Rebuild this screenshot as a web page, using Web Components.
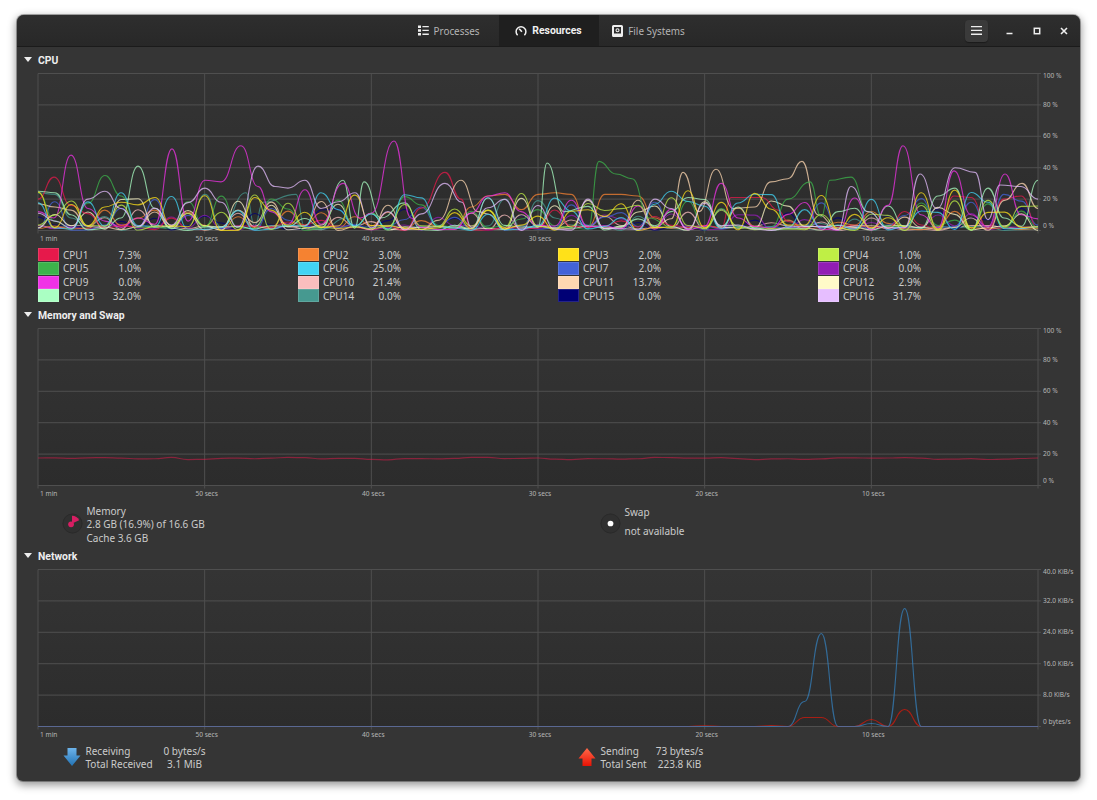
<!DOCTYPE html>
<html>
<head>
<meta charset="utf-8">
<title>System Monitor</title>
<style>
html, body { margin: 0; background: #fff; }
body { padding: 15px 17px 19px; font-family: "Noto Sans", "Open Sans", sans-serif; }
</style>
</head>
<body>
<gsm-window>
  <gsm-header slot="header">
    <gsm-tab>
      <svg slot="icon" width="11" height="11" viewBox="0 0 11 11" fill="#eee"><path d="M0 .5h3v2.6H0zM0 4.2h3v2.6H0zM0 7.9h3v2.6H0zM4.4 1h6.4v1.3H4.4zM4.4 4.8h6.4v1.3H4.4zM4.4 8.6h6.4v1.3H4.4z"/></svg>
      Processes
    </gsm-tab>
    <gsm-tab active>
      <svg slot="icon" width="12" height="12" viewBox="0 0 12 12" fill="none" stroke="#f2f2f2"><path d="M2.6 10.2A4.9 4.9 0 1 1 9.4 10.2" stroke-width="1.5"/><path d="M4.2 3.8 6.9 6.8" stroke-width="1.6"/></svg>
      Resources
    </gsm-tab>
    <gsm-tab>
      <svg slot="icon" width="11" height="12" viewBox="0 0 11 12"><path fill-rule="evenodd" fill="#eee" d="M1.5 0h8A1.5 1.5 0 0 1 11 1.5v9A1.5 1.5 0 0 1 9.500 12h-8A1.500 1.500 0 0 1 0 10.500v-9A1.500 1.500 0 0 1 1.500 0zM2 2v6.600h7V2z"/><circle cx="5.500" cy="5.200" r="1.500" fill="none" stroke="#eee" stroke-width="1.100"/></svg>
      File Systems
    </gsm-tab>
  </gsm-header>

  <gsm-section title="CPU">
    <gsm-graph id="cpu" ylabels="100 %,80 %,60 %,40 %,20 %,0 %"></gsm-graph>
    <gsm-cpu-legend id="cpulegend"></gsm-cpu-legend>
  </gsm-section>

  <gsm-section title="Memory and Swap">
    <gsm-graph id="mem" ylabels="100 %,80 %,60 %,40 %,20 %,0 %"></gsm-graph>
    <gsm-stats height="41" offset="45" second="538">
      <gsm-stat style="--t:3px">
        <svg slot="icon" width="21" height="21" viewBox="0 0 22 22"><circle cx="11" cy="11" r="10" fill="#303030" stroke="#2a2a2a"/><path d="M10.500 11V2.800A8.500 8.500 0 0 1 18 7.600z" fill="#d81e63"/><circle cx="9.500" cy="11.800" r="3" fill="#d81e63"/></svg>
        <div>Memory</div>
        <div>2.8 GB (16.9%) of 16.6 GB</div>
        <div>Cache 3.6 GB</div>
      </gsm-stat>
      <gsm-stat style="--t:5px">
        <svg slot="icon" width="21" height="21" viewBox="0 0 22 22"><circle cx="11" cy="11" r="10" fill="#303030" stroke="#2a2a2a"/><circle cx="11" cy="11" r="3" fill="#fff"/></svg>
        <div style="margin-top:-8px">Swap</div>
        <div style="margin-top:6px">not available</div>
      </gsm-stat>
    </gsm-stats>
  </gsm-section>

  <gsm-section title="Network">
    <gsm-graph id="net" ylabels="40.0 KiB/s,32.0 KiB/s,24.0 KiB/s,16.0 KiB/s,8.0 KiB/s,0 bytes/s"></gsm-graph>
    <gsm-stats height="26" offset="45" second="515">
      <gsm-stat style="--t:2px">
        <svg slot="icon" width="20" height="20" viewBox="0 0 20 20"><defs><linearGradient id="dn" x1="0" y1="0" x2="0" y2="1"><stop offset="0" stop-color="#6db3ea"/><stop offset="1" stop-color="#2273b4"/></linearGradient></defs><path d="M5.500 1h9v7.500h4L10 19 1.500 8.500h4z" fill="url(#dn)"/></svg>
        <gsm-net-row label="Receiving" value="0 bytes/s" w="75"></gsm-net-row>
        <gsm-net-row label="Total Received" value="3.1 MiB" w="75"></gsm-net-row>
      </gsm-stat>
      <gsm-stat style="--t:2px">
        <svg slot="icon" width="20" height="20" viewBox="0 0 20 20"><defs><linearGradient id="up" x1="0" y1="0" x2="0" y2="1"><stop offset="0" stop-color="#ff6a4a"/><stop offset="1" stop-color="#e81204"/></linearGradient></defs><path d="M10 1l8.500 10.500h-4V19h-9v-7.500h-4z" fill="url(#up)"/></svg>
        <gsm-net-row label="Sending" value="73 bytes/s" w="55"></gsm-net-row>
        <gsm-net-row label="Total Sent" value="223.8 KiB" w="55"></gsm-net-row>
      </gsm-stat>
    </gsm-stats>
  </gsm-section>
</gsm-window>

<script>
class GsmWindow extends HTMLElement {
  constructor() {
    super();
    this.attachShadow({ mode: 'open' });
    this.shadowRoot.innerHTML = `
<style>
:host {
  display: block;
  width: 1063px;
  height: 766px;
  background: #353535;
  color: #d6d6d6;
  border-radius: 7px 7px 6px 6px;
  box-shadow: 0 3px 9px 1px rgba(0,0,0,.42), 0 0 0 1px rgba(0,0,0,.3);
  overflow: hidden;
  font-family: "Noto Sans", "Open Sans", sans-serif;
  font-size: 10px;
}
</style>
<slot name="header"></slot>
<slot></slot>`;
  }
}

class GsmHeader extends HTMLElement {
  constructor() {
    super();
    this.attachShadow({ mode: 'open' });
    this.shadowRoot.innerHTML = `
<style>
:host {
  display: grid;
  grid-template-columns: 1fr auto 1fr;
  height: 32px;
  box-sizing: border-box;
  background: linear-gradient(#2e2e2e, #282828);
  border-bottom: 1px solid #1b1b1b;
}
.tabs { display: flex; grid-column: 2; }
.right { display: flex; grid-column: 3; justify-content: flex-end; align-items: center; padding-right: 3px; }
.menu {
  width: 23px; height: 22px; margin-right: 8px; border-radius: 4px;
  background: #3a3a3a; box-shadow: 0 1px 1px rgba(0,0,0,.35);
  display: flex; align-items: center; justify-content: center;
}
.btn { width: 27px; height: 22px; display: flex; align-items: center; justify-content: center; }
</style>
<div class="tabs"><slot></slot></div>
<div class="right">
  <div class="menu"><svg width="11" height="9" viewBox="0 0 11 9" fill="#eee"><path d="M0 0h11v1.300H0zM0 3.800h11v1.300H0zM0 7.600h11v1.300H0z"/></svg></div>
  <div class="btn"><svg width="7" height="8" viewBox="0 0 7 8" fill="#eee"><path d="M.5 5.800h6v1.500h-6z"/></svg></div>
  <div class="btn"><svg width="8" height="8" viewBox="0 0 8 8" fill="none" stroke="#eee" stroke-width="1.500"><rect x="1.300" y="1.300" width="5.400" height="5.400"/></svg></div>
  <div class="btn"><svg width="8" height="8" viewBox="0 0 8 8" fill="none" stroke="#eee" stroke-width="1.600"><path d="M1 1l6 6M7 1l-6 6"/></svg></div>
</div>`;
  }
}

class GsmTab extends HTMLElement {
  constructor() {
    super();
    this.attachShadow({ mode: 'open' });
    this.shadowRoot.innerHTML = `
<style>
:host {
  display: flex;
  width: 100px;
  align-items: center;
  justify-content: center;
  gap: 5px;
  color: #b4b4b4;
  font-size: 9.900px;
}
:host([active]) { background: #1f1f1f; color: #f0f0f0; font-family: Roboto, sans-serif; font-weight: 700; font-size: 10.400px; }
::slotted(svg) { display: block; flex: none; }
</style>
<slot name="icon"></slot><span><slot></slot></span>`;
  }
}

class GsmSection extends HTMLElement {
  constructor() {
    super();
    this.attachShadow({ mode: 'open' });
    this.shadowRoot.innerHTML = `
<style>
:host { display: block; }
.head {
  height: 26px; box-sizing: border-box; display: flex; align-items: center;
  padding: 1px 0 0 7px; gap: 6px;
  color: #eee; font-family: Roboto, sans-serif; font-weight: 700; font-size: 10.400px;
}
.head i {
  width: 0; height: 0; border-left: 4px solid transparent; border-right: 4px solid transparent;
  border-top: 5px solid #eee; margin-top: -2px;
}
</style>
<div class="head"><i></i><span id="t"></span></div>
<slot></slot>`;
    this.shadowRoot.getElementById('t').textContent = this.getAttribute('title');
  }
}

// one plot: same curve drawing as the real graph, horizontal tangents on each sample
class GsmGraph extends HTMLElement {
  constructor() {
    super();
    this.attachShadow({ mode: 'open' });
    this.left = 21;
    this.w = 1000;
    this.h = 157;
  }
  set series(list) {
    const L = this.left, W = this.w, H = this.h, top = 3.5;
    const labels = this.getAttribute('ylabels').split(',');
    const ty = [6, 34.5, 66, 97.500, 128.500, 156];
    const xl = ['1 min', '50 secs', '40 secs', '30 secs', '20 secs', '10 secs'];
    let s = '';
    for (let i = 0; i <= 5; i++) {
      const y = top + H * i / 5;
      const w = (i === 0 || i === 5) ? 1.2 : 1;
      s += `<path d="M${L} ${y}H${L + W + 3}" stroke="#4f4f4f" stroke-width="${w}"/>`;
      s += `<text x="${L + W + 5}" y="${ty[i] + 2.300}" class="t">${labels[i]}</text>`;
    }
    for (let i = 0; i <= 6; i++) {
      const x = L + W * i / 6;
      s += `<path d="M${x} ${top}V${top + H + 3}" stroke="#4f4f4f"/>`;
      if (i < 6) {
        const a = i === 0 ? 'start' : 'middle';
        s += `<text x="${x + 2}" y="${top + H + 10.500}" class="t" text-anchor="${a}">${xl[i]}</text>`;
      }
    }
    for (const ln of list) {
      let d = '';
      ln.pts.forEach((p, i) => {
        const y = top + H - p[1] * H, x = L + p[0];
        if (!i) { d += `M${x} ${y}`; return; }
        const q = ln.pts[i - 1], qx = L + q[0], qy = top + H - q[1] * H, m = (qx + x) / 2;
        d += `C${m} ${qy} ${m} ${y} ${x} ${y}`;
      });
      s += `<path d="${d}" fill="none" stroke="${ln.color}" stroke-width="${ln.width || 1.100}" opacity="${ln.alpha || .75}"/>`;
    }
    this.shadowRoot.innerHTML = `
<style>
:host { display: flow-root; height: 174px; }
svg { display: block; margin-top: -3px; }
.t { font: 6.600px "Noto Sans", sans-serif; fill: #b5b5b5; }
</style>
<svg width="1063" height="177">
<defs><linearGradient id="bg" x1="0" y1="0" x2="0" y2="1"><stop offset="0" stop-color="#343434"/><stop offset="1" stop-color="#2c2c2c"/></linearGradient></defs>
<rect x="${L}" y="3" width="${W}" height="${H}" fill="url(#bg)"/>${s}</svg>`;
  }
}

class GsmCpuLegend extends HTMLElement {
  constructor() {
    super();
    this.attachShadow({ mode: 'open' });
    this.shadowRoot.innerHTML = `
<style>
:host {
  display: grid;
  grid-template-columns: repeat(4, 260px);
  grid-auto-rows: 13.660px;
  height: 54px;
  padding: 1px 0 0 21px;
  align-items: center;
  font-size: 10px;
  color: #cbcbcb;
}
.c { display: flex; align-items: center; }
.s { width: 19px; height: 11px; border: 1px solid rgba(255,255,255,.14); margin-right: 4px; box-sizing: content-box; }
.n { width: 42px; }
.v { width: 36px; text-align: right; }
</style>`;
  }
  set items(list) {
    for (const it of list) {
      const c = document.createElement('div');
      c.className = 'c';
      c.innerHTML = `<div class="s" style="background:${it[2]}"></div><div class="n">${it[0]}</div><div class="v">${it[1]}</div>`;
      this.shadowRoot.appendChild(c);
    }
  }
}

class GsmStats extends HTMLElement {
  constructor() {
    super();
    this.attachShadow({ mode: 'open' });
    const h = this.getAttribute('height'), o = this.getAttribute('offset'), s = this.getAttribute('second');
    this.shadowRoot.innerHTML = `
<style>
:host { display: grid; grid-template-columns: ${s}px 1fr; height: ${h}px; padding-left: ${o}px; align-items: center; font-size: 10px; color: #cbcbcb; }
</style>
<slot></slot>`;
  }
}

class GsmStat extends HTMLElement {
  constructor() {
    super();
    this.attachShadow({ mode: 'open' });
    this.shadowRoot.innerHTML = `
<style>
:host { display: flex; align-items: center; gap: 3.500px; }
::slotted(svg) { display: block; flex: none; }
.txt { line-height: 13.300px; margin-top: var(--t, 0); }
</style>
<slot name="icon"></slot><div class="txt"><slot></slot></div>`;
  }
}

class GsmNetRow extends HTMLElement {
  constructor() {
    super();
    this.attachShadow({ mode: 'open' });
    const w = this.getAttribute('w') || 75;
    this.shadowRoot.innerHTML = `
<style>
:host { display: flex; }
.l { width: ${w}px; white-space: nowrap; }
.v { width: 48px; text-align: center; white-space: nowrap; }
</style>
<div class="l">${this.getAttribute('label')}</div><div class="v">${this.getAttribute('value')}</div>`;
  }
}

customElements.define('gsm-window', GsmWindow);
customElements.define('gsm-header', GsmHeader);
customElements.define('gsm-tab', GsmTab);
customElements.define('gsm-section', GsmSection);
customElements.define('gsm-graph', GsmGraph);
customElements.define('gsm-cpu-legend', GsmCpuLegend);
customElements.define('gsm-stats', GsmStats);
customElements.define('gsm-stat', GsmStat);
customElements.define('gsm-net-row', GsmNetRow);

const cpus = [
  ['CPU1', '7.3%', '#e6194b'], ['CPU2', '3.0%', '#f58231'], ['CPU3', '2.0%', '#ffe119'], ['CPU4', '1.0%', '#bfef45'],
  ['CPU5', '1.0%', '#3cb44b'], ['CPU6', '25.0%', '#42d4f4'], ['CPU7', '2.0%', '#4363d8'], ['CPU8', '0.0%', '#911eb4'],
  ['CPU9', '0.0%', '#f032e6'], ['CPU10', '21.4%', '#fabebe'], ['CPU11', '13.7%', '#ffd8b1'], ['CPU12', '2.9%', '#fffac8'],
  ['CPU13', '32.0%', '#aaffc3'], ['CPU14', '0.0%', '#469990'], ['CPU15', '0.0%', '#000075'], ['CPU16', '31.7%', '#e6beff']
];
document.getElementById('cpulegend').items = cpus;

function rng(a) {
  return () => {
    a = (a + 0x6D2B79F5) | 0;
    let t = Math.imul(a ^ (a >>> 15), 1 | a);
    t = (t + Math.imul(t ^ (t >>> 7), 61 | t)) ^ t;
    return ((t ^ (t >>> 14)) >>> 0) / 4294967296;
  };
}

// peaks read off the reference: x in page px, value in %
const anchors = {
  CPU1: [[38,20],[54,34],[71,16],[445,37],[461,20],[731,21],[762,21],[778,13],[954,22],[971,21],[1004,20],[1021,22]],
  CPU2: [[488,22],[505,23],[538,23],[555,24],[571,23],[605,23],[621,23],[638,22],[655,8]],
  CPU3: [[121,18],[155,21],[255,21],[271,13],[621,17]],
  CPU5: [[38,24],[55,6],[105,35],[121,22],[599,44],[616,36],[632,33],[649,8],[810,31],[830,32],[851,34],[868,12]],
  CPU6: [[121,24],[321,24],[671,25],[988,18]],
  CPU7: [[355,4],[421,15],[971,18],[1004,23]],
  CPU9: [[38,12],[54,8],[71,48],[88,14],[105,6],[138,8],[155,4],[172,52],[188,6],[205,32],[221,31],[241,54],[258,28],[271,12],[288,4],[305,26],[321,4],[343,30],[360,8],[394,57],[411,8],[488,22],[505,24],[521,12],[721,30],[738,8],[888,16],[903,54],[921,10],[954,38],[971,10],[1005,36],[1021,10]],
  CPU11: [[38,17],[55,15],[71,13],[188,11],[238,13],[255,5],[461,32],[478,12],[683,37],[699,12],[716,39],[733,14],[771,31],[788,33],[802,44],[818,10],[971,8],[1022,30],[1038,14]],
  CPU13: [[38,25],[55,24],[71,10],[121,8],[138,41],[155,14],[343,32],[364,31],[381,8],[547,43],[564,12],[671,12],[688,21],[938,22],[955,27],[988,27],[1004,8],[1038,32]],
  CPU14: [[38,24],[55,23],[71,8],[205,23],[246,24],[263,18],[280,15],[296,23],[330,23],[346,8],[505,20],[538,19],[555,8]],
  CPU16: [[38,11],[55,6],[88,20],[105,25],[121,14],[205,27],[221,18],[258,41],[275,28],[288,27],[305,32],[321,14],[355,24],[388,12],[445,30],[462,18],[655,20],[671,14],[851,28],[868,12],[920,36],[937,14],[955,40],[975,37],[1000,29],[1021,28],[1038,20]]
};
// [odds of a bump, height of a bump]
const busy = {
  CPU1: [.3, 16], CPU2: [.3, 15], CPU3: [.55, 26], CPU4: [.55, 24], CPU5: [.45, 22], CPU6: [.55, 26], CPU7: [.45, 21], CPU8: [.3, 11],
  CPU9: [.4, 22], CPU10: [.35, 14], CPU11: [.35, 20], CPU12: [.45, 23], CPU13: [.4, 21], CPU14: [.15, 10], CPU15: [.5, 15], CPU16: [.35, 20]
};

const cpuLines = cpus.map((c, n) => {
  const r = rng(n * 97 + 11), b = busy[c[0]], pts = [];
  let prev = false;
  for (let i = 0; i <= 60; i++) {
    const up = r() < (prev ? b[0] * .35 : b[0]);
    const v = up ? b[1] * (.3 + r() * .7) : r() * 3.500;
    pts.push([i * 1000 / 60, v]);
    prev = up;
  }
  for (const a of anchors[c[0]] || []) {
    const x = a[0] - 38;
    const i = Math.round(x * 60 / 1000);
    pts[Math.min(i, 60)] = [x, a[1]];
  }
  return { name: c[0], color: c[2], pts: pts.map(p => [p[0], p[1] / 100]) };
});
const drawOrder = ['CPU10','CPU14','CPU15','CPU8','CPU2','CPU7','CPU12','CPU1','CPU11','CPU5','CPU13','CPU9','CPU6','CPU4','CPU3','CPU16'];
document.getElementById('cpu').series = drawOrder.map(n => cpuLines.find(l => l.name === n));

const r2 = rng(5);
const memPts = [];
for (let i = 0; i <= 60; i++) {
  const v = 17.200 + Math.sin(i * .53) * .45 + Math.sin(i * 1.7 + 1) * .3 + (r2() - .5) * .3 + (i === 8 ? .7 : 0);
  memPts.push([i * 1000 / 60, v / 100]);
}
document.getElementById('mem').series = [{ color: '#e6194b', pts: memPts, alpha: .5, width: 1.200 }];

// network values in plot px above the baseline
function netLine(vals) {
  const pts = [];
  for (let i = 0; i <= 60; i++) pts.push([i * 1000 / 60, (vals[i] || 0) / 157]);
  return pts;
}
document.getElementById('net').series = [
  { color: '#d2190c', alpha: .75, pts: netLine({ 40: .8, 44: 1, 46: 9, 47: 9, 50: 7, 52: 17 }) },
  { color: '#3584c4', alpha: .7, pts: netLine({ 46: 25, 47: 93, 50: 3, 52: 118 }) }
];
</script>
</body>
</html>
